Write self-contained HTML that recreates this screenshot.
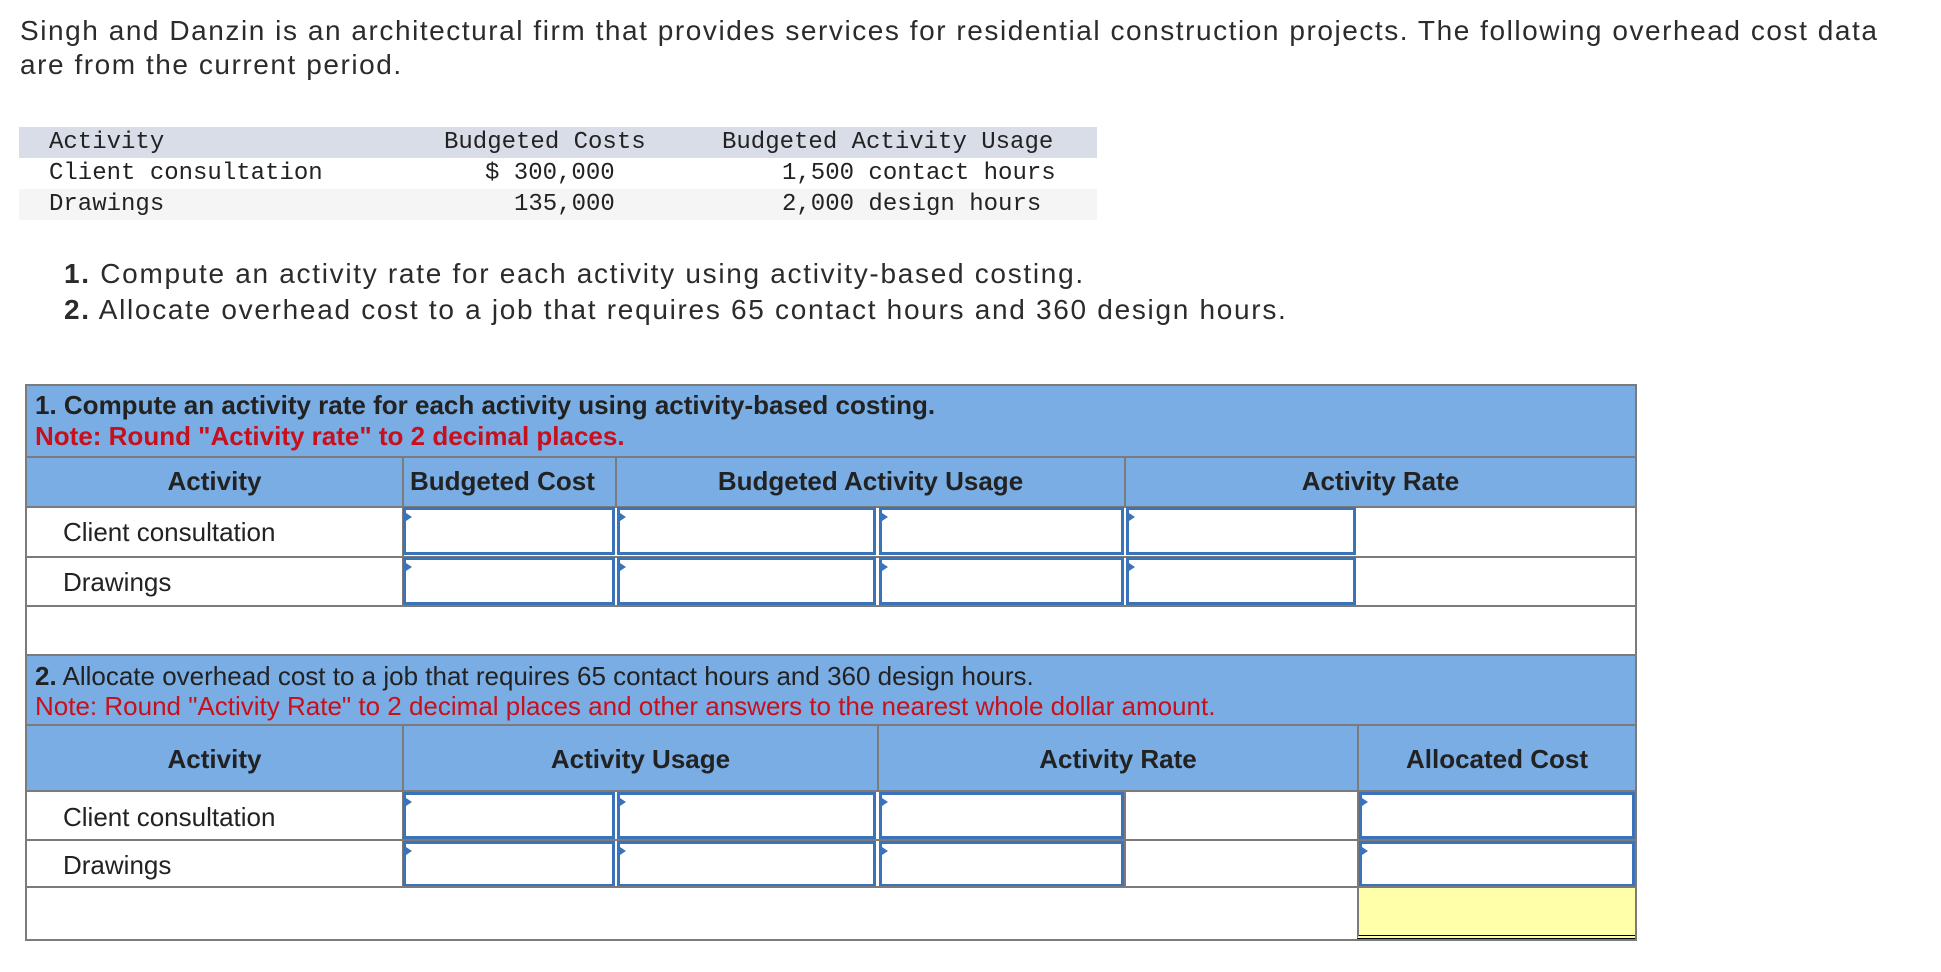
<!DOCTYPE html>
<html><head><meta charset="utf-8"><style>
*{margin:0;padding:0;box-sizing:border-box}
body{width:1941px;height:972px;background:#fff;position:relative;overflow:hidden;font-family:"Liberation Sans",Arial,sans-serif;color:#222}
.a{position:absolute;white-space:nowrap}
.intro{font-size:28px;color:#2b2b2b;line-height:34px;letter-spacing:1.55px}
.mono{font-family:"Liberation Mono",monospace;font-size:24px;color:#222;line-height:31px}
.q{font-size:28px;color:#2b2b2b;letter-spacing:1.7px}
.c{position:absolute;border:2px solid #7b7b7b}
.hb{background:#79ade4}
.t{font-size:26px;color:#222}
.b{font-weight:bold}
.red{color:#c8101c}
.in{position:absolute;border:3px solid #3a73b9;background:#fff}
.in:before{content:"";position:absolute;left:-3px;top:1px;border-left:9px solid #3a73b9;border-top:6px solid transparent;border-bottom:6px solid transparent}
</style></head><body>
<div class="a intro" style="left:20px;top:14px">Singh and Danzin is an architectural firm that provides services for residential construction projects. The following overhead cost data</div>
<div class="a intro" style="left:20px;top:48px">are from the current period.</div>

<div class="a" style="left:19px;top:127px;width:1078px;height:31px;background:#d9dde8"></div>
<div class="a" style="left:19px;top:189px;width:1078px;height:31px;background:#f5f5f5"></div>
<div class="a mono" style="left:49px;top:127px">Activity</div>
<div class="a mono" style="left:444px;top:127px">Budgeted Costs</div>
<div class="a mono" style="left:722px;top:127px">Budgeted Activity Usage</div>
<div class="a mono" style="left:49px;top:158px">Client consultation</div>
<div class="a mono" style="left:485px;top:158px">$ 300,000</div>
<div class="a mono" style="left:782px;top:158px">1,500 contact hours</div>
<div class="a mono" style="left:49px;top:189px">Drawings</div>
<div class="a mono" style="left:514px;top:189px">135,000</div>
<div class="a mono" style="left:782px;top:189px">2,000 design hours</div>

<div class="a q" style="left:64px;top:258px"><b>1.</b> Compute an activity rate for each activity using activity-based costing.</div>
<div class="a q" style="left:64px;top:294px"><b>2.</b> Allocate overhead cost to a job that requires 65 contact hours and 360 design hours.</div>

<!-- Table 1 -->
<div class="c hb" style="left:25px;top:384px;width:1612px;height:74px"></div>
<div class="a t b" style="left:35px;top:390px">1. Compute an activity rate for each activity using activity-based costing.</div>
<div class="a t b red" style="left:35px;top:421px">Note: Round "Activity rate" to 2 decimal places.</div>
<div class="c hb" style="left:25px;top:456px;width:379px;height:52px"></div>
<div class="c hb" style="left:402px;top:456px;width:215px;height:52px"></div>
<div class="c hb" style="left:615px;top:456px;width:511px;height:52px"></div>
<div class="c hb" style="left:1124px;top:456px;width:513px;height:52px"></div>
<div class="a t b" style="left:25px;top:466px;width:379px;text-align:center">Activity</div>
<div class="a t b" style="left:410px;top:466px">Budgeted Cost</div>
<div class="a t b" style="left:615px;top:466px;width:511px;text-align:center">Budgeted Activity Usage</div>
<div class="a t b" style="left:1124px;top:466px;width:513px;text-align:center">Activity Rate</div>

<div class="c" style="left:25px;top:506px;width:379px;height:52px"></div>
<div class="c" style="left:402px;top:506px;width:1235px;height:52px"></div>
<div class="c" style="left:25px;top:556px;width:379px;height:51px"></div>
<div class="c" style="left:402px;top:556px;width:1235px;height:51px"></div>
<div class="a t" style="left:63px;top:517px">Client consultation</div>
<div class="a t" style="left:63px;top:567px">Drawings</div>
<div class="in" style="left:403px;top:507px;width:212px;height:48px"></div>
<div class="in" style="left:617px;top:507px;width:259px;height:48px"></div>
<div class="in" style="left:879px;top:507px;width:245px;height:48px"></div>
<div class="in" style="left:1126px;top:507px;width:230px;height:48px"></div>
<div class="in" style="left:403px;top:557px;width:212px;height:48px"></div>
<div class="in" style="left:617px;top:557px;width:259px;height:48px"></div>
<div class="in" style="left:879px;top:557px;width:245px;height:48px"></div>
<div class="in" style="left:1126px;top:557px;width:230px;height:48px"></div>
<div class="c" style="left:25px;top:605px;width:1612px;height:51px"></div>

<!-- Table 2 -->
<div class="c hb" style="left:25px;top:654px;width:1612px;height:72px"></div>
<div class="a t" style="left:35px;top:661px"><b>2.</b> Allocate overhead cost to a job that requires 65 contact hours and 360 design hours.</div>
<div class="a t red" style="left:35px;top:691px">Note: Round "Activity Rate" to 2 decimal places and other answers to the nearest whole dollar amount.</div>
<div class="c hb" style="left:25px;top:724px;width:379px;height:68px"></div>
<div class="c hb" style="left:402px;top:724px;width:477px;height:68px"></div>
<div class="c hb" style="left:877px;top:724px;width:482px;height:68px"></div>
<div class="c hb" style="left:1357px;top:724px;width:280px;height:68px"></div>
<div class="a t b" style="left:25px;top:744px;width:379px;text-align:center">Activity</div>
<div class="a t b" style="left:402px;top:744px;width:477px;text-align:center">Activity Usage</div>
<div class="a t b" style="left:877px;top:744px;width:482px;text-align:center">Activity Rate</div>
<div class="a t b" style="left:1357px;top:744px;width:280px;text-align:center">Allocated Cost</div>

<div class="c" style="left:25px;top:790px;width:379px;height:51px"></div>
<div class="c" style="left:402px;top:790px;width:1235px;height:51px"></div>
<div class="c" style="left:1124px;top:790px;width:235px;height:51px"></div>
<div class="c" style="left:25px;top:839px;width:379px;height:49px"></div>
<div class="c" style="left:402px;top:839px;width:1235px;height:49px"></div>
<div class="c" style="left:1124px;top:839px;width:235px;height:49px"></div>
<div class="a t" style="left:63px;top:802px">Client consultation</div>
<div class="a t" style="left:63px;top:850px">Drawings</div>
<div class="in" style="left:403px;top:792px;width:212px;height:47px"></div>
<div class="in" style="left:617px;top:792px;width:259px;height:47px"></div>
<div class="in" style="left:879px;top:792px;width:245px;height:47px"></div>
<div class="in" style="left:1359px;top:792px;width:276px;height:47px"></div>
<div class="in" style="left:403px;top:841px;width:212px;height:46px"></div>
<div class="in" style="left:617px;top:841px;width:259px;height:46px"></div>
<div class="in" style="left:879px;top:841px;width:245px;height:46px"></div>
<div class="in" style="left:1359px;top:841px;width:276px;height:46px"></div>
<div class="c" style="left:25px;top:886px;width:1612px;height:55px"></div>
<div class="a" style="left:1357px;top:888px;width:278px;height:51px;background:#ffffaa;border-left:2px solid #7b7b7b;border-bottom:4px double #000"></div>
</body></html>
